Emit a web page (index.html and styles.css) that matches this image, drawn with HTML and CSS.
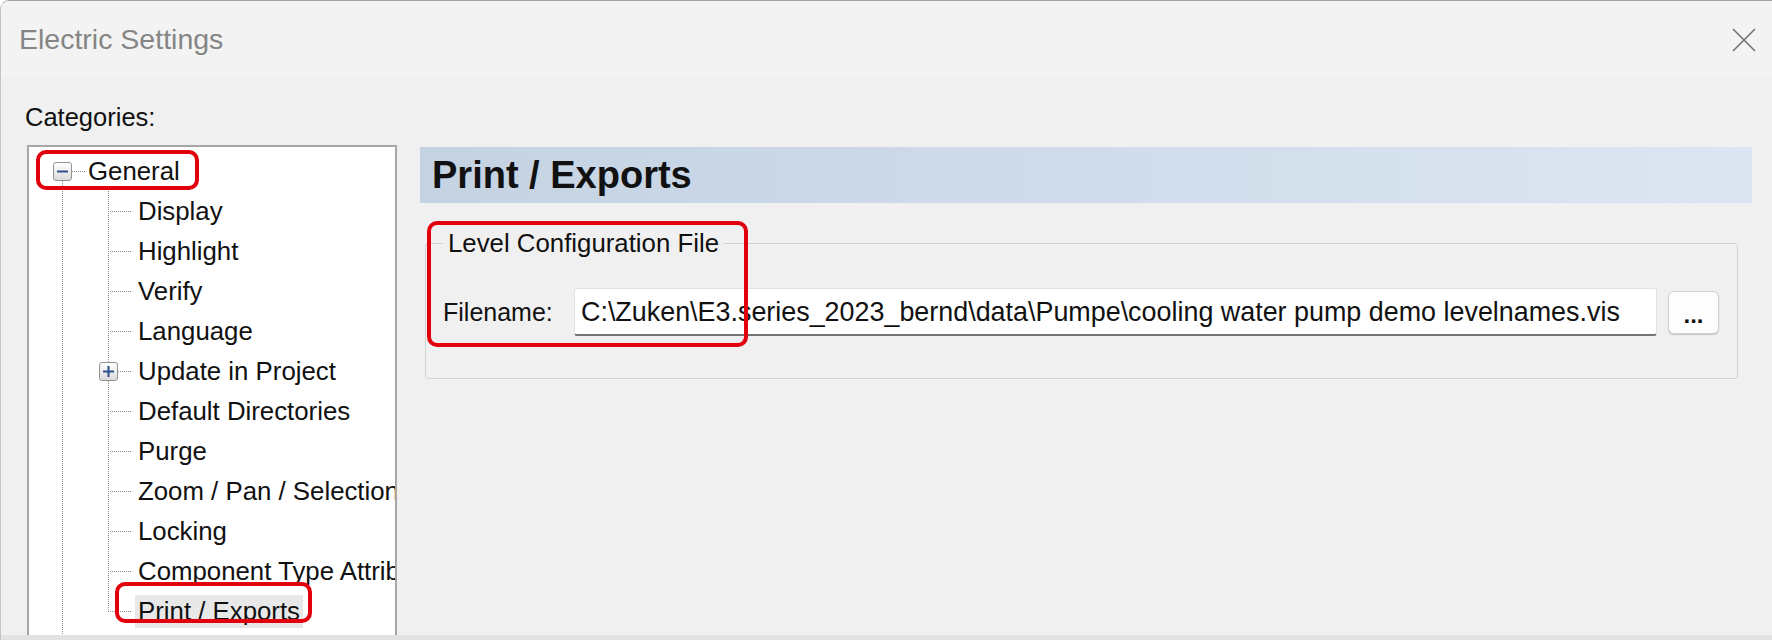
FILE: index.html
```html
<!DOCTYPE html>
<html lang="en">
<head>
  <meta charset="UTF-8">
  <meta name="viewport" content="width=device-width, initial-scale=1.0">
  <link rel="stylesheet" href="styles.css">
  <title>Electric Settings</title>
</head>
<body>

  <div class="window">
    <div class="titlebar">
      <span class="title">Electric Settings</span>
      <svg class="close" width="24" height="24" viewBox="0 0 24 24">
        <path d="M1 1L23 23M23 1L1 23" stroke="#727272" stroke-width="1.6" fill="none"/>
      </svg>
    </div>

    <div class="content">
      <!-- category tree -->
      <div class="categories">
        <div class="cat-label">Categories:</div>
        <div class="tree">
          <div class="row">
            <span class="cell cell-root">
              <span class="expander"><svg viewBox="0 0 11 11"><path d="M0 5.5H11" stroke="#2f4f8c" stroke-width="2"/></svg></span>
            </span>
            <span class="node">General</span>
          </div>
          <div class="row"><span class="cell cell-pass"></span><span class="cell cell-tee"></span><span class="node node-child">Display</span></div>
          <div class="row"><span class="cell cell-pass"></span><span class="cell cell-tee"></span><span class="node node-child">Highlight</span></div>
          <div class="row"><span class="cell cell-pass"></span><span class="cell cell-tee"></span><span class="node node-child">Verify</span></div>
          <div class="row"><span class="cell cell-pass"></span><span class="cell cell-tee"></span><span class="node node-child">Language</span></div>
          <div class="row">
            <span class="cell cell-pass"></span>
            <span class="cell cell-tee">
              <span class="expander"><svg viewBox="0 0 11 11"><path d="M0 5.5H11M5.5 0V11" stroke="#2f4f8c" stroke-width="2"/></svg></span>
            </span>
            <span class="node node-child">Update in Project</span>
          </div>
          <div class="row"><span class="cell cell-pass"></span><span class="cell cell-tee"></span><span class="node node-child">Default Directories</span></div>
          <div class="row"><span class="cell cell-pass"></span><span class="cell cell-tee"></span><span class="node node-child">Purge</span></div>
          <div class="row"><span class="cell cell-pass"></span><span class="cell cell-tee"></span><span class="node node-child">Zoom / Pan / Selection</span></div>
          <div class="row"><span class="cell cell-pass"></span><span class="cell cell-tee"></span><span class="node node-child">Locking</span></div>
          <div class="row"><span class="cell cell-pass"></span><span class="cell cell-tee"></span><span class="node node-child">Component Type Attributes</span></div>
          <div class="row"><span class="cell cell-pass"></span><span class="cell cell-elbow"></span><span class="node node-selected">Print / Exports</span></div>
          <div class="row"><span class="cell cell-pass"></span></div>
        </div>
      </div>

      <!-- settings page -->
      <div class="settings">
        <div class="page-title">Print / Exports</div>
        <fieldset class="group">
          <legend>Level Configuration File</legend>
          <div class="file-row">
            <label class="file-label" for="levelFile">Filename:</label>
            <input class="file-input" type="text" id="levelFile" value="C:\Zuken\E3.series_2023_bernd\data\Pumpe\cooling water pump demo levelnames.vis">
            <button class="browse">...</button>
          </div>
        </fieldset>
      </div>
    </div>

    <div class="bottom-edge"></div>

    <!-- red annotation frames -->
    <div class="mark mark-general"></div>
    <div class="mark mark-print"></div>
    <div class="mark mark-level"></div>
  </div>

</body>
</html>
```

FILE: styles.css
```css
body {
  margin: 0;
  background-color: #fff;
  font-family: 'Liberation Sans', Arial, sans-serif;
}

.window {
  width: 1772px;
  height: 640px;
  box-sizing: border-box;
  border-top: 1px solid #a2a2a2;
  border-left: 1px solid #c4c4c4;
  border-top-left-radius: 9px;
  background-color: #f0f0f0;
  display: flex;
  flex-direction: column;
  overflow: hidden;
  position: relative;
}

.titlebar {
  height: 77px;
  flex-shrink: 0;
  background-color: #f3f3f3;
  display: flex;
  align-items: center;
  justify-content: space-between;
  padding: 0 16px 0 18px;
}

.title {
  font-size: 28.5px;
  color: #858585;
}

.content {
  flex: 1;
  min-height: 0;
  display: flex;
  padding: 24px 20px 0 26px;
  overflow: hidden;
}

/* left: categories */
.categories {
  width: 370px;
  flex-shrink: 0;
  display: flex;
  flex-direction: column;
}

.cat-label {
  font-size: 25.5px;
  line-height: 30px;
  color: #111;
  margin: 0 0 13px -2px;
}

.tree {
  flex: 1;
  background-color: #fff;
  border: 2px solid #a6a6a6;
  border-bottom: none;
  padding: 4px 0 0 10px;
  overflow: hidden;
}

.row {
  display: flex;
  align-items: center;
  height: 40px;
  white-space: nowrap;
}

.cell {
  width: 46px;
  height: 40px;
  flex-shrink: 0;
  display: flex;
  align-items: center;
  justify-content: center;
  background-repeat: no-repeat;
}

/* dotted tree guides */
.cell-pass {
  background-image: repeating-linear-gradient(to bottom, #8a8a8a 0 1px, transparent 1px 2px);
  background-position: 23px 0;
  background-size: 1px 100%;
}

.cell-tee {
  background-image:
    repeating-linear-gradient(to bottom, #8a8a8a 0 1px, transparent 1px 2px),
    repeating-linear-gradient(to right, #8a8a8a 0 1px, transparent 1px 2px);
  background-position: 23px 0, 23px 20px;
  background-size: 1px 100%, 23px 1px;
}

.cell-elbow {
  background-image:
    repeating-linear-gradient(to bottom, #8a8a8a 0 1px, transparent 1px 2px),
    repeating-linear-gradient(to right, #8a8a8a 0 1px, transparent 1px 2px);
  background-position: 23px 0, 23px 20px;
  background-size: 1px 20px, 23px 1px;
}

.cell-root {
  background-image:
    repeating-linear-gradient(to bottom, #8a8a8a 0 1px, transparent 1px 2px),
    repeating-linear-gradient(to right, #8a8a8a 0 1px, transparent 1px 2px);
  background-position: 23px 20px, 23px 20px;
  background-size: 1px 20px, 23px 1px;
}

.expander {
  width: 19px;
  height: 19px;
  box-sizing: border-box;
  border: 1px solid #939393;
  border-radius: 3px;
  background: linear-gradient(#ffffff, #dadada);
  display: flex;
  align-items: center;
  justify-content: center;
}

.expander svg {
  width: 11px;
  height: 11px;
}

.node {
  font-size: 25.8px;
  line-height: 40px;
  color: #111;
  margin-left: 3px;
}

.node-child {
  margin-left: 7px;
}

.node-selected {
  line-height: 33px;
  background-color: #e8e8e8;
  padding: 0 3px;
  margin-left: 4px;
}

/* right: settings page */
.settings {
  flex: 1;
  margin: 45px 0 0 23px;
}

.page-title {
  height: 56px;
  line-height: 56px;
  padding-left: 12px;
  background: linear-gradient(to right, #c4d2e2, #dce6f2);
  font-size: 38px;
  font-weight: bold;
  color: #111;
}

.group {
  margin: 25px 14px 0 5px;
  border: 1px solid #d2d2d2;
  border-radius: 3px;
  padding: 30px 0 42px 17px;
  min-width: 0;
}

.group legend {
  font-size: 25.8px;
  line-height: 30px;
  padding: 0 5px;
  color: #111;
}

.file-row {
  display: flex;
  align-items: center;
  height: 48px;
}

.file-label {
  width: 131px;
  flex-shrink: 0;
  font-size: 25px;
  color: #111;
}

.file-input {
  width: 1083px;
  height: 48px;
  box-sizing: border-box;
  margin: 0;
  padding: 2px 6px 0;
  border: 1px solid #e2e2e2;
  border-bottom: 2px solid #747474;
  border-radius: 3px;
  background-color: #fff;
  font-family: 'Liberation Sans', Arial, sans-serif;
  font-size: 26.9px;
  color: #111;
  outline: none;
}

.browse {
  margin-left: 11px;
  width: 51px;
  height: 43px;
  padding: 6px 0 0;
  border: 1px solid #d0d0d0;
  border-radius: 6px;
  background-color: #fdfdfd;
  box-shadow: 0 1px 1px #c4c4c4;
  font-family: 'Liberation Sans', Arial, sans-serif;
  font-size: 24px;
  font-weight: bold;
  color: #111;
}

.bottom-edge {
  height: 5px;
  flex-shrink: 0;
  background-color: #e2e2e2;
}

/* red annotation frames */
.mark {
  position: absolute;
  box-sizing: border-box;
  border: 4px solid #e3000d;
  border-radius: 10px;
}

.mark-general {
  left: 35px;
  top: 149px;
  width: 163px;
  height: 40px;
}

.mark-print {
  left: 114px;
  top: 581px;
  width: 197px;
  height: 41px;
}

.mark-level {
  left: 426px;
  top: 220px;
  width: 321px;
  height: 126px;
}
```
